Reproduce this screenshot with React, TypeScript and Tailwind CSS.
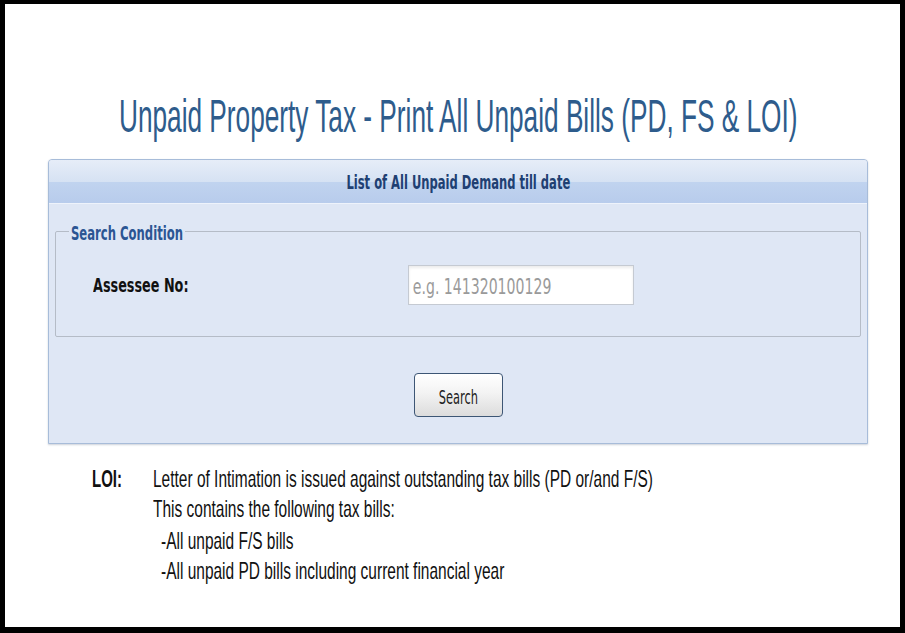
export default function App() {
  const arial = "font-['Liberation_Sans',Arial,sans-serif]";
  const tahoma = "font-['DejaVu_Sans',Tahoma,sans-serif]";
  return (
    <div className="w-[905px] h-[633px] box-border bg-white border-solid border-black border-t-[4px] border-l-[5px] border-r-[5px] border-b-[6px] flex flex-col overflow-hidden">
      <div className="ml-[43px] w-[820px] mt-[86px] h-[52px] flex justify-center items-center whitespace-nowrap">
        <h1 className={`${arial} inline-block origin-center scale-x-[0.57] text-[46px] leading-[52px] font-normal text-[#2e5c8c]`}>
          Unpaid Property Tax - Print All Unpaid Bills (PD, FS &amp; LOI)
        </h1>
      </div>

      <div className="ml-[43px] w-[820px] mt-[17px] border border-[#a7bcd9] rounded-t-[4px] bg-[#dfe7f5] shadow-[0_1px_2px_rgba(60,80,110,0.25)]">
        <div className="h-[44px] rounded-t-[3px] bg-[linear-gradient(to_bottom,#e6edf8_0%,#d6e2f3_50%,#c0d3ef_52%,#b8ccec_100%)] border-b border-[#eef3fb] flex items-center justify-center whitespace-nowrap">
          <span className={`${tahoma} inline-block origin-center scale-x-[0.607] translate-y-[1px] text-[19px] font-bold text-[#203f72]`}>
            List of All Unpaid Demand till date
          </span>
        </div>

        <div className="px-[6px] pt-[17px]">
          <fieldset className="border border-solid border-[#b5bcc7] rounded-[2px] pb-[31px]">
            <legend className="ml-[13px] px-[2px] w-[116px] h-[20px] leading-[20px] whitespace-nowrap">
              <span className={`${tahoma} inline-block origin-left scale-x-[0.612] translate-y-[2px] text-[19px] font-bold text-[#2b5593]`}>
                Search Condition
              </span>
            </legend>
            <div className="mt-[24px] flex items-center">
              <div className="w-[352px] shrink-0 pl-[37px] whitespace-nowrap">
                <label htmlFor="assessee" className={`${tahoma} inline-block origin-left scale-x-[0.64] text-[20px] font-bold text-[#111]`}>
                  Assessee No:
                </label>
              </div>
              <div className="w-[226px] h-[40px] shrink-0 border border-[#c5cad2] bg-white shadow-[inset_0_2px_3px_rgba(0,0,0,0.08)] overflow-hidden">
                <input
                  id="assessee"
                  type="text"
                  placeholder="e.g. 141320100129"
                  className={`${tahoma} w-[353px] h-full origin-left scale-x-[0.64] pl-[6px] pt-[2px] text-[22px] text-[#333] placeholder:text-[#9a9a9a] bg-transparent outline-none`}
                />
              </div>
            </div>
          </fieldset>

          <div className="pt-[36px] pb-[26px] flex justify-center">
            <button className="w-[89px] h-[44px] border border-[#3d5675] rounded-[4px] bg-[linear-gradient(to_bottom,#ffffff_0%,#f3f3f3_45%,#dcdcdc_100%)] flex items-center justify-center whitespace-nowrap">
              <span className={`${tahoma} inline-block origin-center scale-x-[0.57] translate-y-[2px] text-[20px] text-[#222]`}>
                Search
              </span>
            </button>
          </div>
        </div>
      </div>

      <div className={`${arial} mt-[20px] ml-[87px] flex text-[24px] leading-[30px] text-[#111]`}>
        <div className="w-[61px] shrink-0 whitespace-nowrap">
          <span className="inline-block origin-left scale-x-[0.625] font-bold">LOI:</span>
        </div>
        <div className="flex flex-col whitespace-nowrap">
          <div className="h-[30px]">
            <span className="inline-block origin-left scale-x-[0.645]">
              Letter of Intimation is issued against outstanding tax bills (PD or/and F/S)
            </span>
          </div>
          <div className="h-[30px]">
            <span className="inline-block origin-left scale-x-[0.645]">This contains the following tax bills:</span>
          </div>
          <div className="h-[30px] mt-[2px] pl-[8px]">
            <span className="inline-block origin-left scale-x-[0.645]">-All unpaid F/S bills</span>
          </div>
          <div className="h-[30px] pl-[8px]">
            <span className="inline-block origin-left scale-x-[0.645]">-All unpaid PD bills including current financial year</span>
          </div>
        </div>
      </div>
    </div>
  );
}
